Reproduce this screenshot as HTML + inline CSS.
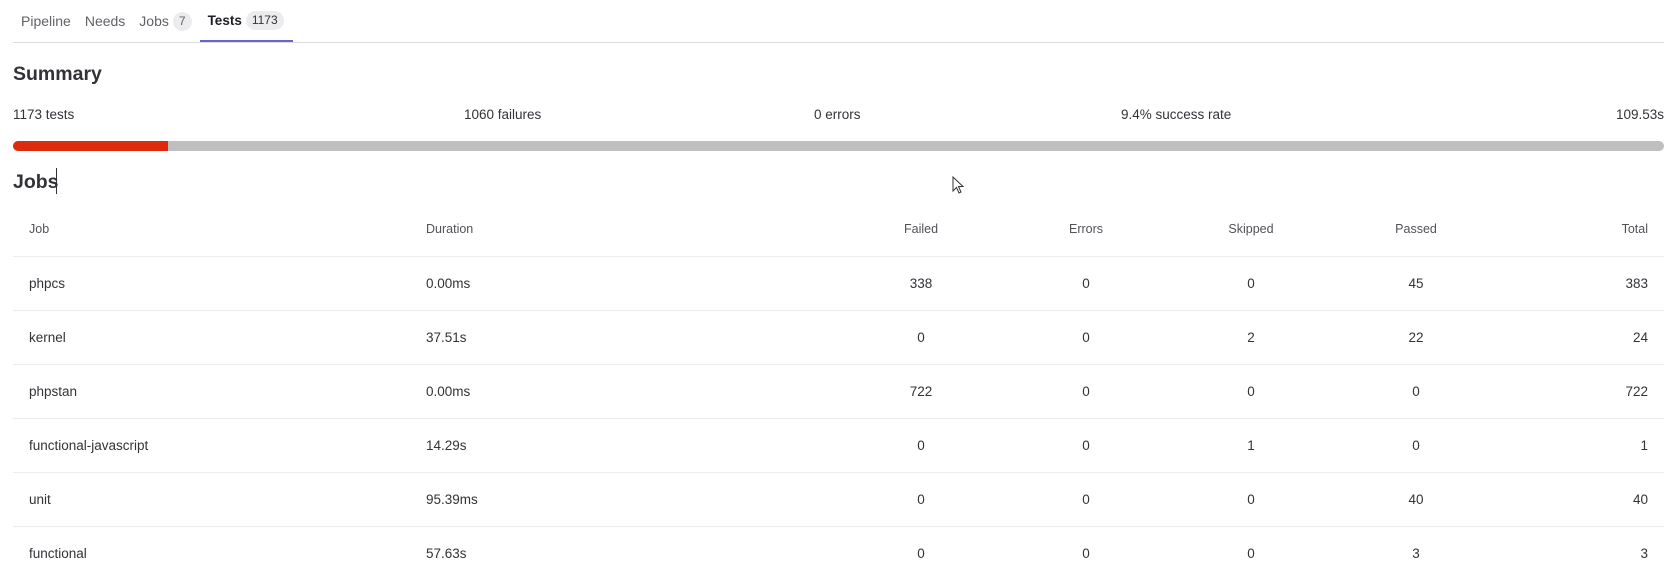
<!DOCTYPE html>
<html><head><meta charset="utf-8"><style>
*{margin:0;padding:0;box-sizing:border-box}
body{width:1680px;height:580px;background:#fff;font-family:"Liberation Sans",sans-serif;color:#333238;position:relative;overflow:hidden}
.a{position:absolute;white-space:nowrap}
.tabs{position:absolute;left:13px;top:0;height:42px;display:flex;font-size:14px;color:#626168}
.tab{display:flex;align-items:center;padding:0 8px;height:42px;gap:4px}
.badge{background:#ececef;border-radius:10px;font-size:12px;color:#626168;height:19px;line-height:19px;padding:0 6px}
.st{font-size:13.5px;top:107px;color:#333238}
.th{font-size:12.5px;color:#535158;top:222px}
.td{font-size:13.5px;color:#333238}
.line{position:absolute;left:13px;width:1651px;height:1px;background:#ececef}
.c{transform:translateX(-50%)}
.r{transform:translateX(-100%)}
</style></head><body>
<div class="tabs">
<div class="tab">Pipeline</div>
<div class="tab" style="padding-left:6px">Needs</div>
<div class="tab" style="padding-left:6px">Jobs<span class="badge">7</span></div>
<div class="tab" style="color:#1f1e24;border-bottom:2px solid #6666c4;padding:0 9px 0 8px"><b style="font-size:13.5px">Tests</b><span class="badge" style="color:#333238">1173</span></div>
</div>
<div class="a" style="left:13px;top:42px;width:1651px;height:1px;background:#dcdcde"></div>

<div class="a" style="left:13px;top:63px;font-size:19.5px;font-weight:bold;color:#333238">Summary</div>
<div class="a st" style="left:13px">1173 tests</div>
<div class="a st" style="left:464px">1060 failures</div>
<div class="a st" style="left:814px">0 errors</div>
<div class="a st" style="left:1121px">9.4% success rate</div>
<div class="a st r" style="left:1664px">109.53s</div>
<div class="a" style="left:13px;top:141px;width:1651px;height:10px;background:#bfbfbf;border-radius:5px;overflow:hidden"><div style="width:155px;height:10px;background:#dd2b0e"></div></div>

<div class="a" style="left:13px;top:171px;font-size:19.5px;font-weight:bold;color:#333238">Jobs</div>
<div class="a" style="left:56px;top:168px;width:1px;height:26px;background:#333"></div>
<svg class="a" style="left:952px;top:176px" width="14" height="20" viewBox="0 0 14 20"><path d="M1 1 L1 15 L4.5 11.5 L7 17 L9 16 L6.5 10.5 L11 10.5 Z" fill="#fff" stroke="#333" stroke-width="1"/></svg>

<div class="a th" style="left:29px">Job</div>
<div class="a th" style="left:426px">Duration</div>
<div class="a th c" style="left:921px">Failed</div>
<div class="a th c" style="left:1086px">Errors</div>
<div class="a th c" style="left:1251px">Skipped</div>
<div class="a th c" style="left:1416px">Passed</div>
<div class="a th r" style="left:1648px">Total</div>
<div class="line" style="top:256px"></div>

<div id="rows"></div>
<script>
var d=[["phpcs","0.00ms",338,0,0,45,383],["kernel","37.51s",0,0,2,22,24],["phpstan","0.00ms",722,0,0,0,722],["functional-javascript","14.29s",0,0,1,0,1],["unit","95.39ms",0,0,0,40,40],["functional","57.63s",0,0,0,3,3]];
var h="";d.forEach(function(r,i){var t=276+i*54;
h+='<div class="a td" style="left:29px;top:'+t+'px">'+r[0]+'</div>';
h+='<div class="a td" style="left:426px;top:'+t+'px">'+r[1]+'</div>';
[921,1086,1251,1416].forEach(function(x,j){h+='<div class="a td c" style="left:'+x+'px;top:'+t+'px">'+r[2+j]+'</div>';});
h+='<div class="a td r" style="left:1648px;top:'+t+'px">'+r[6]+'</div>';
if(i<5)h+='<div class="line" style="top:'+(310+i*54)+'px"></div>';});
document.getElementById("rows").innerHTML=h;
</script>
</body></html>
